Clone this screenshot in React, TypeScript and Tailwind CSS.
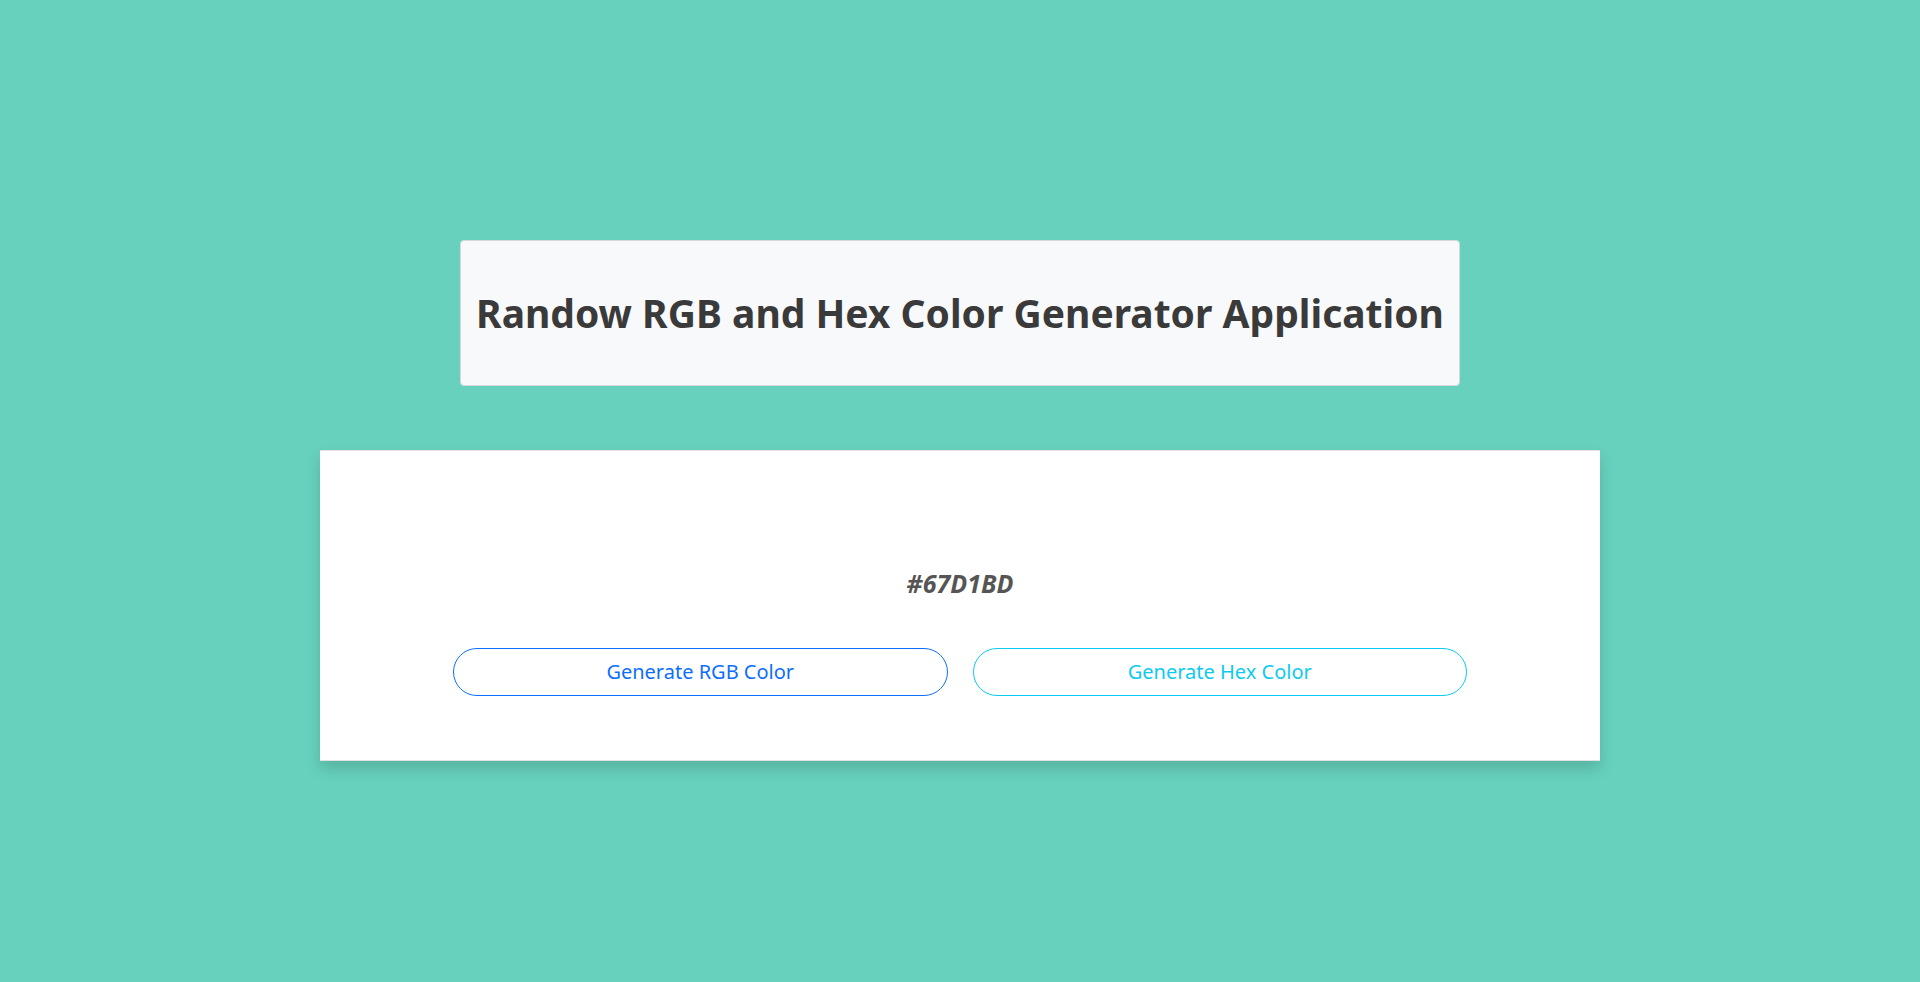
import { useState } from 'react';

var font = { fontFamily: '"Comic Sans MS", "Noto Sans", sans-serif' };

export default function App() {
  var [color, setColor] = useState('#67D1BD');

  function randomHex() {
    var hex = '#';
    var chars = '0123456789ABCDEF';
    for (var i = 0; i < 6; i++) hex += chars[Math.floor(Math.random() * 16)];
    setColor(hex);
  }

  function randomRgb() {
    var r = Math.floor(Math.random() * 256);
    var g = Math.floor(Math.random() * 256);
    var b = Math.floor(Math.random() * 256);
    setColor(`rgb(${r}, ${g}, ${b})`);
  }

  return (
    <div className="min-h-screen bg-[#67d1bd] flex flex-col items-center pt-[240px]" style={font}>
      <div className="w-[1000px] h-[146px] flex items-center justify-center rounded border border-[#d6d8db] bg-[#f8f9fa]">
        <h1 className="text-[39px] font-bold text-[#3a3a3a] leading-tight whitespace-nowrap">
          Randow RGB and Hex Color Generator Application
        </h1>
      </div>

      <div className="mt-[64px] w-[1280px] bg-white border-y border-[#e2e2e2] shadow-[0_8px_14px_rgba(0,0,0,0.15)] flex flex-col items-center pt-[118px] pb-[64px]">
        <h4 className="text-[25px] font-bold italic text-[#555] leading-[29px]">{color}</h4>
        <div className="mt-[50px] flex gap-[25px] w-[1014px]">
          <button
            onClick={randomRgb}
            className="flex-1 h-12 rounded-full border border-[#0d6efd] text-[#0d6efd] text-xl bg-white"
          >
            Generate RGB Color
          </button>
          <button
            onClick={randomHex}
            className="flex-1 h-12 rounded-full border border-[#0dcaf0] text-[#0dcaf0] text-xl bg-white"
          >
            Generate Hex Color
          </button>
        </div>
      </div>
    </div>
  );
}
